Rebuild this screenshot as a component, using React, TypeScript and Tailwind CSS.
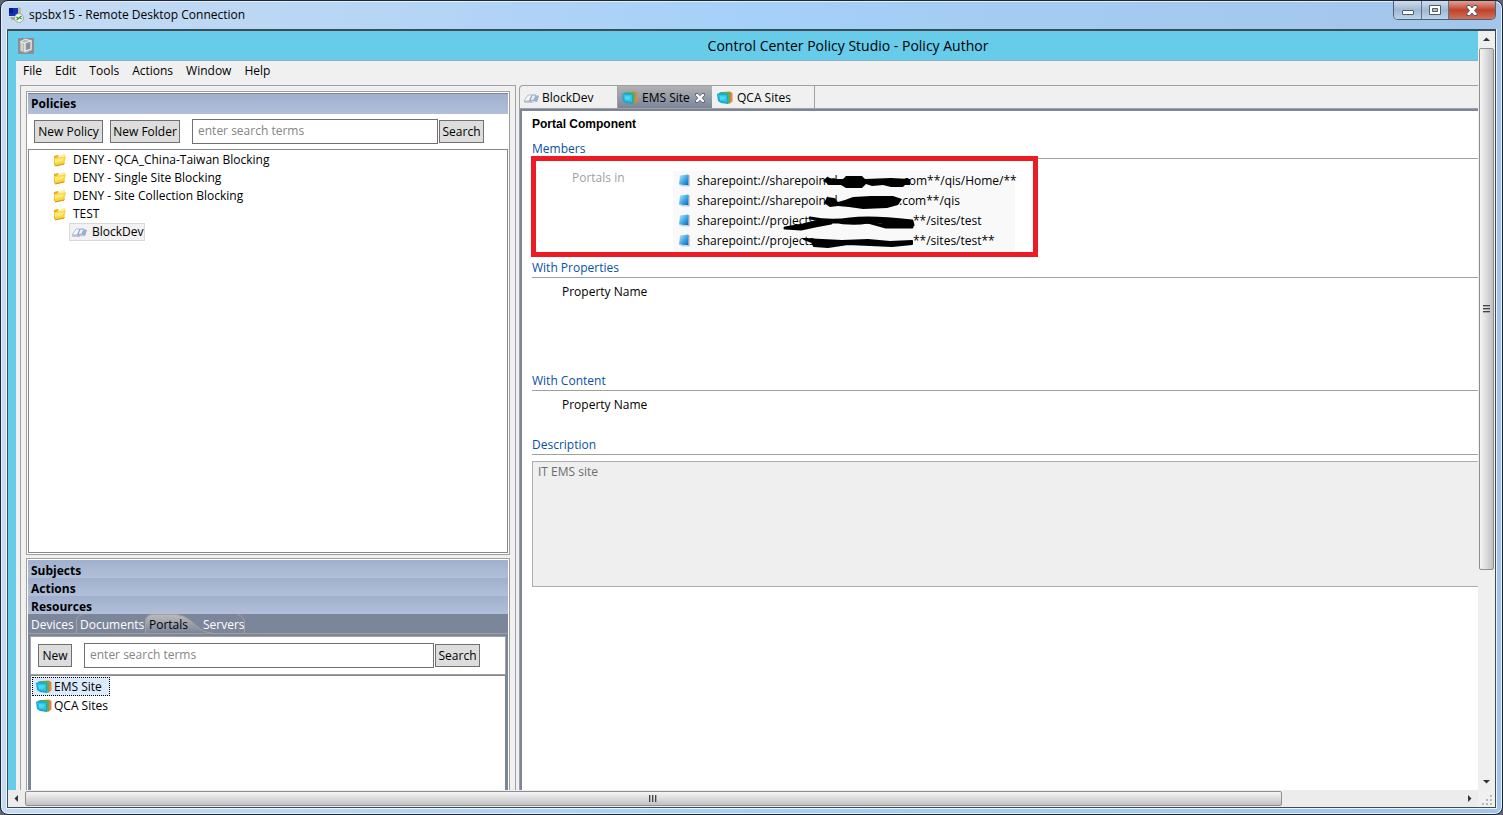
import type { ReactNode } from "react";

const menus = ["File", "Edit", "Tools", "Actions", "Window", "Help"];

const policies = [
  "DENY - QCA_China-Taiwan Blocking",
  "DENY - Single Site Blocking",
  "DENY - Site Collection Blocking",
  "TEST",
];

const members = [
  { host: "sharepoint://sharepointd", path: "com**/qis/Home/**", hostWidth: "w-[206px]" },
  { host: "sharepoint://sharepointd", path: ".com**/qis", hostWidth: "w-[202px]" },
  { host: "sharepoint://projects", path: "**/sites/test", hostWidth: "w-[216px]" },
  { host: "sharepoint://projects", path: "**/sites/test**", hostWidth: "w-[216px]" },
];

function RemoteIcon() {
  return (
    <svg width="16" height="16" viewBox="0 0 16 16" aria-hidden="true">
      <path d="M1 1h9v9H1z" fill="#e4e4d8" />
      <path d="M1 1h9v8H1z" fill="#1330b8" />
      <path d="M1 1h4v5H1z" fill="#071b84" />
      <path d="M10 0l3 1v8h-3z" fill="#b9b9ae" />
      <path d="M2 10h6v3H4z" fill="#a6a69c" />
      <circle cx="11" cy="11" r="4.5" fill="#eef3ea" stroke="#8b918b" strokeWidth=".7" />
      <path d="M8.500 10l2 1.500-2 1.500M13.500 9l-2 1.500 2 1.500" fill="none" stroke="#25962c" strokeWidth="1.200" />
    </svg>
  );
}

function StudioIcon() {
  return (
    <svg width="16" height="16" viewBox="0 0 16 16" aria-hidden="true">
      <path d="M0 0h16v16H0z" fill="#8b8f91" />
      <path d="M2 4l5-3 7 1v10l-6 3-6-2z" fill="#b9bbbb" />
      <path d="M7 5l6-2v8l-6 2z" fill="#8f9293" stroke="#e8e8e8" strokeWidth="1.200" />
      <path d="M2 4l5 1v9M4 5v8M2 4l5-3 6 2" fill="none" stroke="#e8e8e8" />
    </svg>
  );
}

function FolderIcon() {
  return (
    <svg width="14" height="14" viewBox="0 0 14 14" aria-hidden="true">
      <path d="M1 3l4-1 1 1.500L12 1v10l-9 2-2-1z" fill="#e5ad1e" />
      <path d="M4 4l8-3v9l-2 1z" fill="#fff1a0" />
      <path d="M1 5l9-1 3-1-2 8-9 2z" fill="#fbd33d" />
      <path d="M2 6l9-1-1 3-8 2z" fill="#ffe977" />
      <path d="M2 13l9-2" stroke="#cf9314" />
    </svg>
  );
}

function PolicyIcon() {
  return (
    <svg width="17" height="12" viewBox="0 0 17 12" aria-hidden="true">
      <path d="M1 9l4-6 11 0-2 7-6 1z" fill="#ccd6e4" />
      <path d="M5 3h4L6 9H1z" fill="#f4f7fb" stroke="#a5b3c8" strokeWidth=".8" />
      <path d="M9 3h4l-2 5-4 1z" fill="#e9eff7" stroke="#8398b8" strokeWidth=".8" />
      <path d="M13 4l3 0-2 6-3-1z" fill="#9dafcc" />
      <path d="M1 10h8" stroke="#a2adbd" />
    </svg>
  );
}

function PortalIcon() {
  return (
    <svg width="16" height="14" viewBox="0 0 16 14" aria-hidden="true">
      <path d="M5 1l8-.5 2.500 1.500v8.500L12 13z" fill="#ee8048" />
      <path d="M3 1l9 0 1.500 1.500-.5 9.500-3 1z" fill="#5fae4c" />
      <path d="M0 3l3-1.500L11 3v10l-7-1L1 10z" fill="#1ba6cd" />
      <path d="M1 3.500l9 .5v7l-7-1z" fill="#2dc5e6" />
      <path d="M3 5l6 .5-2 3.500-4-.5z" fill="#4fd8ee" />
    </svg>
  );
}

function SiteIcon() {
  return (
    <svg className="shrink-0" width="13" height="14" viewBox="0 0 13 14" aria-hidden="true">
      <defs>
        <linearGradient id="site" x1="0" y1="0" x2="1" y2="1">
          <stop offset="0" stopColor="#c2e8fa" />
          <stop offset=".5" stopColor="#4aaee8" />
          <stop offset="1" stopColor="#0f66b8" />
        </linearGradient>
      </defs>
      <path d="M2 1.500L10 .5v11L1 10.500z" fill="url(#site)" />
      <path d="M10 .5l1.500 1v11L10 11.500z" fill="#93a9ba" />
      <path d="M1 10.500l9 1 1.500 1H4z" fill="#c5d7e4" />
    </svg>
  );
}

function Arrow({ d }: { d: string }) {
  return (
    <svg width="7" height="7" viewBox="0 0 7 7" aria-hidden="true">
      <path d={d} fill="#333" />
    </svg>
  );
}

function PushButton({ children, className }: { children: ReactNode; className: string }) {
  return (
    <button
      type="button"
      className={`h-[23px] shrink-0 border border-[#707070] bg-[#dddddd] whitespace-nowrap ${className}`}
    >
      {children}
    </button>
  );
}

function SearchBox({ label, className }: { label: string; className: string }) {
  return (
    <input
      type="text"
      aria-label={label}
      placeholder="enter search terms"
      className={`h-[25px] border border-[#707070] bg-white px-[5px] pb-[3px] outline-none placeholder:text-[#858585] ${className}`}
    />
  );
}

function GroupTitle({ children }: { children: ReactNode }) {
  return (
    <h2 className="h-[18px] bg-linear-to-b from-[#a0b0cd] to-[#b1bfd9] pl-[3px] leading-[22px] font-bold">
      {children}
    </h2>
  );
}

function SectionTitle({ children }: { children: ReactNode }) {
  return (
    <h3 className="h-5 border-b border-[#a0a0a0] leading-[20px] text-[#0a50a5]">{children}</h3>
  );
}

function PoliciesPanel() {
  return (
    <section className="flex min-h-0 flex-1 flex-col border border-[#a0a0a0] bg-white p-px">
      <h2 className="h-[21px] shrink-0 border-t border-[#7f858f] bg-linear-to-b from-[#a0b0cd] to-[#b1bfd9] pl-[3px] leading-[20px] font-bold">
        Policies
      </h2>
      <div className="flex h-[35px] shrink-0 items-center pl-[6px]">
        <PushButton className="mr-[7px] w-[69px]">New Policy</PushButton>
        <PushButton className="mr-3 w-[70px]">New Folder</PushButton>
        <SearchBox label="Search policies" className="mr-px w-[246px]" />
        <PushButton className="w-[45px]">Search</PushButton>
      </div>
      <ul className="min-h-0 flex-1 border border-[#83878f] pt-px pl-6">
        {policies.map((name) => (
          <li key={name} className="flex h-[18px] items-center gap-[6px]">
            <FolderIcon />
            {name}
          </li>
        ))}
        <li className="ml-4 flex h-[18px] w-[76px] items-center gap-1 border border-[#d9d9d9] bg-[#f2f2f2] pl-px">
          <PolicyIcon />
          BlockDev
        </li>
      </ul>
    </section>
  );
}

function ResourceTabs() {
  return (
    <div className="relative h-[19px] bg-[#7c869a] text-white">
      <svg className="absolute inset-0" width="230" height="20" aria-hidden="true">
        <defs>
          <linearGradient id="tab" x1="0" y1="0" x2="0" y2="1">
            <stop offset="0" stopColor="#bcbcbc" />
            <stop offset="1" stopColor="#7c869a" />
          </linearGradient>
        </defs>
        <path d="M117.500 19V6Q119 1 124 .5H148Q156 1 163 7L172 15Q176 18.500 184 19z" fill="url(#tab)" />
        <path
          d="M48.500 19V6Q49 2 54 .5M117.500 19V6Q119 1 124 .5H148Q156 1 163 7L172 15Q176 18.500 184 19M210 .5Q216 3 216.500 8V19"
          fill="none"
          stroke="#a0a0a0"
        />
      </svg>
      <div role="tablist" className="relative flex leading-[21px]">
        <button type="button" role="tab" className="w-12 pl-[3px] text-left">Devices</button>
        <button type="button" role="tab" className="w-[69px] pl-1 text-left">Documents</button>
        <button type="button" role="tab" aria-selected="true" className="w-[55px] pl-1 text-left text-black">
          Portals
        </button>
        <button type="button" role="tab" className="pl-[3px] text-left">Servers</button>
      </div>
    </div>
  );
}

function ResourcesPanel() {
  return (
    <section className="shrink-0 border border-b-0 border-[#a0a0a0] bg-white px-px pt-px">
      <GroupTitle>Subjects</GroupTitle>
      <GroupTitle>Actions</GroupTitle>
      <GroupTitle>Resources</GroupTitle>
      <ResourceTabs />
      <div className="border-t border-[#a0a0a0] bg-[#7c869a] px-[2px] pt-[2px]">
        <div className="flex h-[39px] items-center border border-[#a0a0a0] bg-white pl-[7px]">
          <PushButton className="mr-3 w-[34px]">New</PushButton>
          <SearchBox label="Search portals" className="mr-px w-[350px]" />
          <PushButton className="w-[45px]">Search</PushButton>
        </div>
        <ul className="mx-px h-[115px] border-t border-[#83878f] bg-white pt-px">
          <li className="ml-px flex h-[19px] w-[78px] items-center gap-[2px] border border-dotted border-black bg-[#dcebfc] pl-[3px]">
            <PortalIcon />
            EMS Site
          </li>
          <li className="ml-px flex h-[19px] items-center gap-[2px] pl-1">
            <PortalIcon />
            QCA Sites
          </li>
        </ul>
      </div>
    </section>
  );
}

function EditorTabs() {
  return (
    <div role="tablist" className="flex h-[23px] border-b border-[#a0a0a0]">
      <button type="button" role="tab" className="flex w-[98px] items-center gap-[2px] border-r border-[#a0a0a0] pt-px pl-[3px]">
        <PolicyIcon />
        BlockDev
      </button>
      <div className="flex w-[94px] items-center bg-linear-to-b from-[#b2b2b2] to-[#7c869a] pt-px pl-1">
        <button type="button" role="tab" aria-selected="true" className="flex items-center gap-1">
          <PortalIcon />
          EMS Site
        </button>
        <button type="button" aria-label="Close EMS Site" className="ml-1">
          <svg width="12" height="12" viewBox="0 0 12 12" aria-hidden="true">
            <path
              d="M1.500 1.500h2.500L6 3.700 8 1.500h2.500v2L8.300 6l2.200 2.500v2H8L6 8.300 4 10.500H1.500v-2L3.700 6 1.500 3.500z"
              fill="#f4f4f4"
              stroke="#5f6574"
            />
          </svg>
        </button>
      </div>
      <button type="button" role="tab" className="flex w-[103px] items-center gap-1 border-r border-[#a0a0a0] pt-px pl-[5px]">
        <PortalIcon />
        QCA Sites
      </button>
    </div>
  );
}

function Redaction() {
  return (
    <svg className="absolute top-0 left-[109px]" width="140" height="80" aria-hidden="true">
      <path d="M45 6l6 2 10 0 3-3 16 0 3 3 26-1 19 1 0 6-5 0-2 2-12 0-8-2-11 1-6-2-4 4-16 0-5-3-11 0-7-4z" />
      <path d="M45 26l7 1 4 4 7-2 8-3 18-1 22 0 9 3-4 6-11 3-24 1-14-2-11-1-8 1-6-4z" />
      <path
        d="M3 57l18-3 20-5 8 3-16 3-14 3zM28 47q20 4 40 1t62 2l1 4-30-1M50 50q20 4 36 1l18 5 26 0M40 51q30 0 52 0"
        stroke="#000"
        strokeWidth="3"
        strokeLinejoin="round"
        strokeLinecap="round"
      />
      <path
        d="M22 68l18 1 20 1 26-1 22 2 22-1 0 3-20 2-44-2-20 3-14-1-2-4z"
        stroke="#000"
        strokeWidth="2"
        strokeLinejoin="round"
      />
    </svg>
  );
}

function PortalEditor() {
  return (
    <main className="flex min-w-0 flex-1 flex-col rounded-tl border-t border-l border-[#a0a0a0]">
      <EditorTabs />
      <div className="min-h-0 flex-1 overflow-hidden border-t-2 border-l-2 border-[#7c869a] bg-white pt-1 pl-[10px]">
        <h1 className="mb-[6px] h-[18px] font-['Liberation_Sans',sans-serif] leading-[18px] font-bold">
          Portal Component
        </h1>

        <SectionTitle>Members</SectionTitle>
        <div className="relative flex h-[99px] pt-3 pl-10">
          <div className="absolute -top-[3px] -left-px h-[101px] w-[507px] border-5 border-[#ed1c24]" />
          <span className="w-[101px] leading-[14px] text-[#a0a0a0]">Portals in</span>
          <ul className="relative h-20 w-[342px] bg-[#f9f9f9] pl-[5px]">
            {members.map((member) => (
              <li key={member.host + member.path} className="flex h-5 items-center gap-[6px]">
                <SiteIcon />
                <span className="flex">
                  <span className={`shrink-0 ${member.hostWidth}`}>{member.host}</span>
                  <span>{member.path}</span>
                </span>
              </li>
            ))}
            <Redaction />
          </ul>
        </div>

        <SectionTitle>With Properties</SectionTitle>
        <p className="h-[93px] pt-1 pl-[30px] leading-[20px]">Property Name</p>

        <SectionTitle>With Content</SectionTitle>
        <p className="h-11 pt-1 pl-[30px] leading-[20px]">Property Name</p>

        <SectionTitle>
          <label htmlFor="description">Description</label>
        </SectionTitle>
        <textarea
          id="description"
          readOnly
          defaultValue="IT EMS site"
          className="mt-[6px] block h-[126px] w-full resize-none border border-r-0 border-[#abadb3] bg-[#efefef] px-[5px] py-[2px] text-[#6d6d6d] outline-none"
        />
      </div>
    </main>
  );
}

function VerticalScrollbar() {
  return (
    <div className="flex w-[17px] shrink-0 flex-col bg-[#efefef]">
      <button type="button" aria-label="Scroll up" className="flex h-[17px] shrink-0 items-center justify-center">
        <Arrow d="M0 5L3.500 1.500 7 5z" />
      </button>
      <div className="flex min-h-0 flex-1 flex-col px-px">
        <div className="flex h-[72%] flex-col items-center justify-center gap-px rounded-xs border border-[#8f8f8f] bg-linear-to-r from-[#f5f5f5] via-[#dcdcde] to-[#c0c0c4]">
          <span className="h-[2px] w-[7px] border-t border-[#444] bg-[#aaa]" />
          <span className="h-[2px] w-[7px] border-t border-[#444] bg-[#aaa]" />
          <span className="h-[2px] w-[7px] border-t border-[#444] bg-[#aaa]" />
        </div>
      </div>
      <button type="button" aria-label="Scroll down" className="flex h-[17px] shrink-0 items-center justify-center">
        <Arrow d="M0 2H7L3.500 5.500z" />
      </button>
    </div>
  );
}

function HorizontalScrollbar() {
  return (
    <div className="flex h-[17px] shrink-0 bg-[#ececec]">
      <button type="button" aria-label="Scroll left" className="flex w-[17px] shrink-0 items-center justify-center">
        <Arrow d="M5 0V7L1.500 3.500z" />
      </button>
      <div className="flex min-w-0 flex-1 py-px">
        <div className="flex w-[87.5%] items-center justify-center gap-px rounded-xs border border-[#8f8f8f] bg-linear-to-b from-[#f5f5f5] via-[#dcdcde] to-[#c0c0c4]">
          <span className="h-[7px] w-[2px] border-l border-[#444] bg-[#aaa]" />
          <span className="h-[7px] w-[2px] border-l border-[#444] bg-[#aaa]" />
          <span className="h-[7px] w-[2px] border-l border-[#444] bg-[#aaa]" />
        </div>
      </div>
      <button type="button" aria-label="Scroll right" className="flex w-[17px] shrink-0 items-center justify-center">
        <Arrow d="M2 0V7L5.500 3.500z" />
      </button>
      <div className="flex w-[17px] shrink-0 items-end justify-end bg-[#f0f0f0] p-[2px]">
        <svg width="11" height="11" viewBox="0 0 11 11" fill="#b8b8b8" aria-hidden="true">
          <path d="M8 1h2v2H8zM8 5h2v2H8zM8 9h2v2H8zM4 5h2v2H4zM4 9h2v2H4zM0 9h2v2H0z" />
        </svg>
      </div>
    </div>
  );
}

function TitleBar() {
  return (
    <header className="flex h-7 shrink-0 items-start justify-between pr-px pl-[2px]">
      <div className="flex h-7 items-center gap-[5px]">
        <RemoteIcon />
        <span>spsbx15 - Remote Desktop Connection</span>
      </div>
      <div className="flex h-[19px] overflow-hidden rounded-b-[5px] border border-t-0 border-[#4f5f76]">
        <button
          type="button"
          aria-label="Minimize"
          className="flex w-7 items-center justify-center border-r border-[#5e6f87] bg-linear-to-b from-[#cfdeee] via-[#9fb8d2] to-[#bdd4ea] pt-1"
        >
          <span className="h-[5px] w-3 rounded-[1px] border border-[#535b6b] bg-white" />
        </button>
        <button
          type="button"
          aria-label="Restore"
          className="flex w-[27px] items-center justify-center border-r border-[#5e6f87] bg-linear-to-b from-[#cfdeee] via-[#9fb8d2] to-[#bdd4ea]"
        >
          <svg width="12" height="10" viewBox="0 0 12 10" aria-hidden="true">
            <path d="M.5.5h11v9H.5z" fill="#fff" stroke="#535b6b" />
            <path d="M3.500 3.500h5v3h-5z" fill="#a9bdd4" stroke="#535b6b" />
          </svg>
        </button>
        <button
          type="button"
          aria-label="Close"
          className="flex w-[46px] items-center justify-center bg-linear-to-b from-[#e0a294] via-[#c0402a] to-[#d0705a]"
        >
          <svg width="12" height="11" viewBox="0 0 12 11" aria-hidden="true">
            <path d="M1 .5h3l2 2.500L8 .5h3v2L8.500 5.500 11 8.500v2H8L6 8l-2 2.500H1v-2l2.500-3L1 2.500z" fill="#fff" stroke="#535b6b" />
          </svg>
        </button>
      </div>
    </header>
  );
}

export default function App() {
  return (
    <div className="h-screen bg-[#5d6672] font-['Open_Sans','Noto_Sans',sans-serif] text-[12px] leading-[16px] text-black">
      <div className="flex h-full flex-col overflow-hidden rounded-lg border border-[#1d2733] bg-linear-to-r from-[#c6dbf2] via-[#a5d0f8] to-[#a3c5ea] px-[5px] pb-[5px] inset-ring inset-ring-[#e4f1fd]">
        <TitleBar />
        <div className="flex min-h-0 flex-1 flex-col border border-t-0 border-[#eef6fd]">
          <div className="flex min-h-0 flex-1 flex-col border border-t-2 border-[#3f4a57]">
            <div className="flex min-h-0 flex-1">
              <div className="flex min-w-0 flex-1 flex-col bg-[#67cbea] pl-[8px]">
                <div className="flex h-[29px] shrink-0 items-center pl-[2px]">
                  <StudioIcon />
                  <div className="flex-1 pl-[184px] text-center text-[14px] leading-[20px]">
                    Control Center Policy Studio - Policy Author
                  </div>
                </div>
                <div className="flex min-h-0 flex-1 flex-col bg-[#f0f0f0]">
                  <nav className="flex h-[25px] shrink-0 items-start gap-[13px] border-t border-[#8fafc0] pt-[2px] pl-[7px]">
                    {menus.map((menu) => (
                      <button key={menu} type="button">
                        {menu}
                      </button>
                    ))}
                  </nav>
                  <div className="flex min-h-0 flex-1 gap-[3px] pl-1">
                    <aside className="flex w-[496px] shrink-0 flex-col gap-[3px] border border-b-0 border-[#a0a0a0] px-[5px] pt-[5px]">
                      <PoliciesPanel />
                      <ResourcesPanel />
                    </aside>
                    <PortalEditor />
                  </div>
                </div>
              </div>
              <VerticalScrollbar />
            </div>
            <HorizontalScrollbar />
          </div>
        </div>
      </div>
    </div>
  );
}
